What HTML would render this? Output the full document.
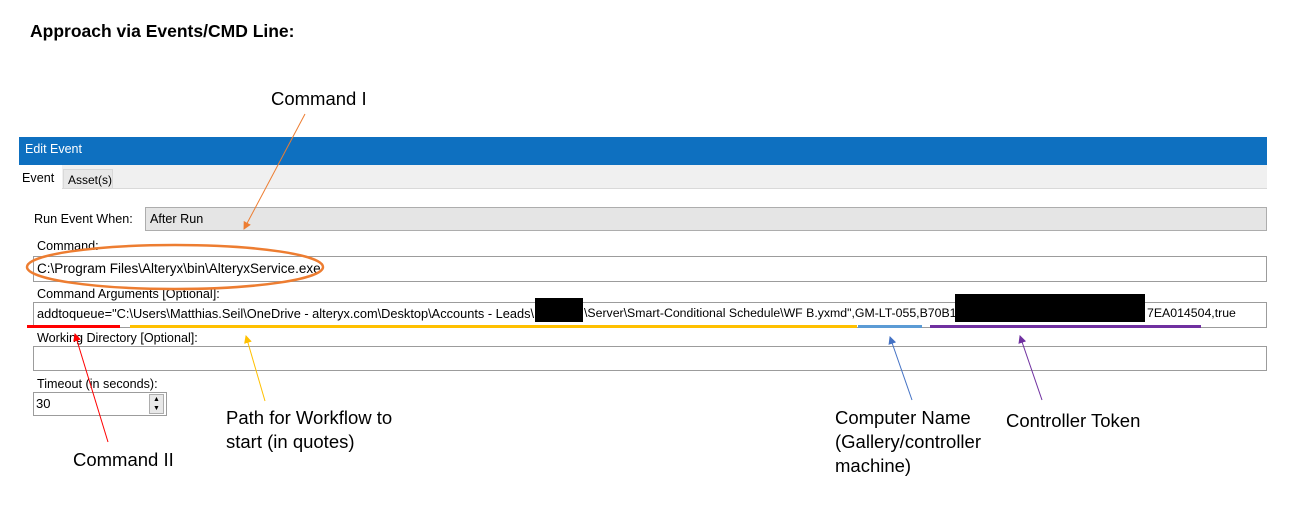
<!DOCTYPE html>
<html><head><meta charset="utf-8"><style>
body{margin:0;width:1291px;height:513px;background:#fff;position:relative;overflow:hidden;font-family:"Liberation Sans",sans-serif;}
.a{position:absolute;white-space:nowrap;}
.ui{font-size:12.6px;color:#000;}
.ann{font-size:18.5px;color:#000;line-height:24px;}
.box{position:absolute;border:1px solid #9c9c9c;background:#fff;box-sizing:border-box;}
</style></head><body>
<div class="a" style="left:30px;top:21px;font-size:17.5px;font-weight:bold;">Approach via Events/CMD Line:</div>
<div class="a ann" style="left:271px;top:87px;">Command I</div>

<div class="a" style="left:19px;top:137px;width:1248px;height:28px;background:#0e70c0;"></div>
<div class="a ui" style="left:25px;top:142px;color:#fff;font-size:12.5px;">Edit Event</div>
<div class="a" style="left:19px;top:165px;width:1248px;height:24px;background:#f0f0f0;border-bottom:1px solid #d9d9d9;box-sizing:border-box;"></div>
<div class="a" style="left:19px;top:165px;width:43px;height:25px;background:#fff;"></div>
<div class="a ui" style="left:22px;top:171px;">Event</div>
<div class="a" style="left:63px;top:169px;width:50px;height:20px;background:#e8e8e8;border:1px solid #d9d9d9;box-sizing:border-box;"></div>
<div class="a ui" style="left:68px;top:173px;font-size:12px;">Asset(s)</div>

<div class="a ui" style="left:34px;top:212px;">Run Event When:</div>
<div class="box" style="left:145px;top:207px;width:1122px;height:24px;background:#e5e5e5;border-color:#adadad;"></div>
<div class="a ui" style="left:150px;top:212px;">After Run</div>

<div class="a ui" style="left:37px;top:239px;">Command:</div>
<div class="box" style="left:33px;top:256px;width:1234px;height:26px;"></div>
<div class="a ui" style="left:37px;top:261px;font-size:13.5px;">C:\Program Files\Alteryx\bin\AlteryxService.exe</div>

<div class="a ui" style="left:37px;top:287px;">Command Arguments [Optional]:</div>
<div class="box" style="left:33px;top:302px;width:1234px;height:26px;"></div>
<div class="a ui" style="left:37px;top:306px;font-size:12.8px;">addtoqueue="C:\Users\Matthias.Seil\OneDrive - alteryx.com\Desktop\Accounts - Leads\</div>
<div class="a ui" style="left:584px;top:306px;font-size:12.3px;">\Server\Smart-Conditional Schedule\WF B.yxmd",GM-LT-055,B70B1</div>
<div class="a ui" style="left:1147px;top:306px;font-size:12.3px;">7EA014504,true</div>
<div class="a" style="left:535px;top:298px;width:48px;height:24px;background:#000;"></div>
<div class="a" style="left:955px;top:294px;width:190px;height:28px;background:#000;"></div>

<div class="a ui" style="left:37px;top:331px;">Working Directory [Optional]:</div>
<div class="box" style="left:33px;top:346px;width:1234px;height:25px;"></div>

<div class="a ui" style="left:37px;top:377px;">Timeout (in seconds):</div>
<div class="box" style="left:33px;top:392px;width:134px;height:24px;"></div>
<div class="a ui" style="left:36px;top:396px;font-size:13px;">30</div>
<div class="a" style="left:149px;top:394px;width:15px;height:20px;background:#e8e8e8;border:1px solid #adadad;box-sizing:border-box;font-size:7px;line-height:9px;text-align:center;">▲<br>▼</div>

<div class="a" style="left:27px;top:325px;width:93px;height:3px;background:#ff0000;"></div>
<div class="a" style="left:130px;top:325px;width:727px;height:3px;background:#ffc000;"></div>
<div class="a" style="left:858px;top:325px;width:64px;height:3px;background:#5b9bd5;"></div>
<div class="a" style="left:930px;top:325px;width:271px;height:3px;background:#7030a0;"></div>

<svg class="a" style="left:0;top:0" width="1291" height="513">
<defs>
<marker id="mo" markerWidth="8" markerHeight="8" refX="7" refY="4" orient="auto"><path d="M0,0 L8,4 L0,8 z" fill="#ed7d31"/></marker>
<marker id="mr" markerWidth="8" markerHeight="8" refX="7" refY="4" orient="auto"><path d="M0,0 L8,4 L0,8 z" fill="#ff0000"/></marker>
<marker id="my" markerWidth="8" markerHeight="8" refX="7" refY="4" orient="auto"><path d="M0,0 L8,4 L0,8 z" fill="#ffc000"/></marker>
<marker id="mb" markerWidth="8" markerHeight="8" refX="7" refY="4" orient="auto"><path d="M0,0 L8,4 L0,8 z" fill="#4472c4"/></marker>
<marker id="mp" markerWidth="8" markerHeight="8" refX="7" refY="4" orient="auto"><path d="M0,0 L8,4 L0,8 z" fill="#7030a0"/></marker>
</defs>
<ellipse cx="175" cy="267" rx="148" ry="22" fill="none" stroke="#ed7d31" stroke-width="2.5"/>
<line x1="305" y1="114" x2="244" y2="229" stroke="#ed7d31" stroke-width="1" marker-end="url(#mo)"/>
<line x1="108" y1="442" x2="75" y2="334" stroke="#ff0000" stroke-width="1" marker-end="url(#mr)"/>
<line x1="265" y1="401" x2="246" y2="336" stroke="#ffc000" stroke-width="1" marker-end="url(#my)"/>
<line x1="912" y1="400" x2="890" y2="337" stroke="#4472c4" stroke-width="1" marker-end="url(#mb)"/>
<line x1="1042" y1="400" x2="1020" y2="336" stroke="#7030a0" stroke-width="1" marker-end="url(#mp)"/>
</svg>

<div class="a ann" style="left:226px;top:406px;">Path for Workflow to<br>start (in quotes)</div>
<div class="a ann" style="left:835px;top:406px;">Computer Name<br>(Gallery/controller<br>machine)</div>
<div class="a ann" style="left:1006px;top:409px;">Controller Token</div>
<div class="a ann" style="left:73px;top:448px;">Command II</div>
</body></html>
